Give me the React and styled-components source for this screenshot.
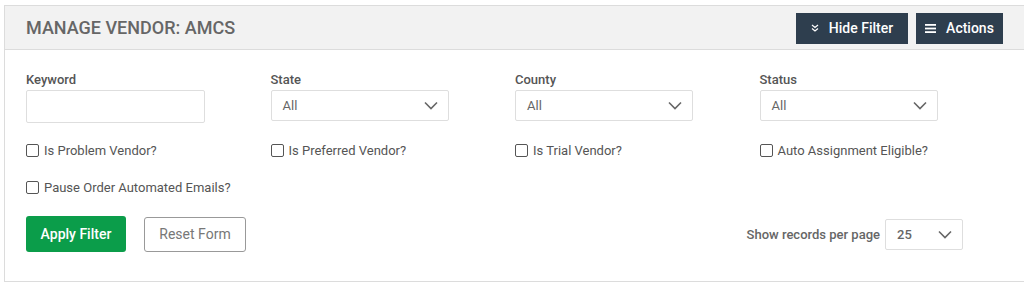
import React from "react";
import styled, { createGlobalStyle } from "styled-components";

const Global = createGlobalStyle`
  html, body { margin: 0; padding: 0; background: #fff; overflow: hidden; }
  body { font-family: Roboto, "Liberation Sans", Arial, sans-serif; }
  * { box-sizing: border-box; }
`;

const Panel = styled.div`
  margin: 5px 0 0 4px;
  width: 1040px;
  height: 277px;
  border: 1px solid #dcdcdc;
  background: #fff;
`;

const Header = styled.div`
  height: 44px;
  background: #f2f2f2;
  border-bottom: 1px solid #dcdcdc;
  display: flex;
  align-items: center;
  padding: 0 0 0 21px;
`;

const Title = styled.h1`
  margin: 0;
  font-size: 18px;
  font-weight: 500;
  color: #666;
  flex: 1;
`;

const HeaderActions = styled.div`
  display: flex;
  gap: 8px;
  margin-right: 40px;
  margin-top: 1px;
`;

const DarkButton = styled.button`
  height: 31px;
  width: ${(p) => p.$w}px;
  background: #2e3e4e;
  color: #fff;
  border: 0;
  border-radius: 0;
  font-family: inherit;
  font-size: 14px;
  font-weight: 500;
  display: flex;
  align-items: center;
  justify-content: center;
  gap: 10px;
  padding: 0;
`;

const Body = styled.div`
  padding: 22px 0 0 21px;
`;

const Grid = styled.div`
  display: grid;
  grid-template-columns: repeat(4, 244.5px);
`;

const Field = styled.div`
  display: flex;
  flex-direction: column;
`;

const Label = styled.label`
  font-size: 13px;
  font-weight: 500;
  color: #555;
  line-height: 16px;
  margin-bottom: 2px;
`;

const TextInput = styled.input`
  width: 179px;
  height: 33px;
  border: 1px solid #dedede;
  border-radius: 2px;
  background: #fff;
  outline: none;
`;

const SelectBox = styled.div`
  width: ${(p) => p.$w || 178}px;
  height: ${(p) => p.$h || 31}px;
  border: 1px solid #dedede;
  border-radius: 2px;
  display: flex;
  align-items: center;
  justify-content: space-between;
  padding: 0 10px 0 11px;
  font-size: 13px;
  color: #666;
  background: #fff;
`;

const CheckRow = styled.div`
  display: grid;
  grid-template-columns: repeat(4, 244.5px);
  margin-top: ${(p) => p.$mt}px;
`;

const Check = styled.label`
  display: flex;
  align-items: center;
  gap: 5px;
  font-size: 13px;
  color: #555;
  height: 16px;
`;

const Box = styled.span`
  width: 13px;
  height: 13px;
  border: 1px solid #555;
  border-radius: 2px;
  background: #fff;
  flex: none;
`;

const Footer = styled.div`
  display: flex;
  align-items: center;
  margin-top: 21px;
  width: 937px;
`;

const GreenButton = styled.button`
  width: 100px;
  height: 36px;
  background: #0b9d4a;
  color: #fff;
  border: 0;
  border-radius: 3px;
  font-family: inherit;
  font-size: 14px;
  font-weight: 500;
`;

const OutlineButton = styled.button`
  width: 102px;
  height: 35px;
  margin-left: 18px;
  background: #fff;
  color: #777;
  border: 1px solid #999;
  border-radius: 3px;
  font-family: inherit;
  font-size: 14px;
`;

const PerPage = styled.div`
  margin-left: auto;
  display: flex;
  align-items: center;
  gap: 5px;
  font-size: 13px;
  font-weight: 500;
  color: #666;
`;

const Chevron = () => (
  <svg width="14" height="9" viewBox="0 0 14 9">
    <path d="M1 1.5 L7 7.5 L13 1.5" fill="none" stroke="#666" strokeWidth="1.6" />
  </svg>
);

const DoubleDown = () => (
  <svg width="8" height="8" viewBox="0 0 8 8">
    <path d="M1 1 L4 3.5 L7 1 M1 4.5 L4 7 L7 4.5" fill="none" stroke="#fff" strokeWidth="1.2" />
  </svg>
);

const Bars = () => (
  <svg width="11" height="9" viewBox="0 0 11 9">
    <rect x="0" y="0" width="11" height="1.8" fill="#fff" />
    <rect x="0" y="3.6" width="11" height="1.8" fill="#fff" />
    <rect x="0" y="7.2" width="11" height="1.8" fill="#fff" />
  </svg>
);

const Select = ({ value, w, h }) => (
  <SelectBox $w={w} $h={h}>
    <span>{value}</span>
    <Chevron />
  </SelectBox>
);

export default function App() {
  return (
    <>
      <Global />
      <Panel>
        <Header>
          <Title>MANAGE VENDOR: AMCS</Title>
          <HeaderActions>
            <DarkButton $w={112}>
              <DoubleDown />
              Hide Filter
            </DarkButton>
            <DarkButton $w={87}>
              <Bars />
              Actions
            </DarkButton>
          </HeaderActions>
        </Header>
        <Body>
          <Grid>
            <Field>
              <Label>Keyword</Label>
              <TextInput />
            </Field>
            <Field>
              <Label>State</Label>
              <Select value="All" />
            </Field>
            <Field>
              <Label>County</Label>
              <Select value="All" />
            </Field>
            <Field>
              <Label>Status</Label>
              <Select value="All" />
            </Field>
          </Grid>
          <CheckRow $mt={19}>
            <Check><Box />Is Problem Vendor?</Check>
            <Check><Box />Is Preferred Vendor?</Check>
            <Check><Box />Is Trial Vendor?</Check>
            <Check><Box />Auto Assignment Eligible?</Check>
          </CheckRow>
          <CheckRow $mt={21}>
            <Check><Box />Pause Order Automated Emails?</Check>
          </CheckRow>
          <Footer>
            <GreenButton>Apply Filter</GreenButton>
            <OutlineButton>Reset Form</OutlineButton>
            <PerPage>
              Show records per page
              <Select value="25" w={78} h={31} />
            </PerPage>
          </Footer>
        </Body>
      </Panel>
    </>
  );
}
